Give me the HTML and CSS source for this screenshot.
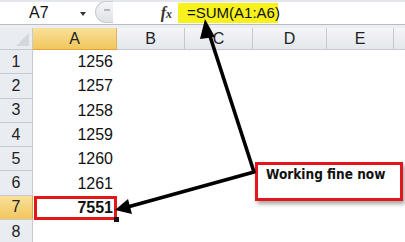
FILE: index.html
```html
<!DOCTYPE html>
<html>
<head>
<meta charset="utf-8">
<link rel="stylesheet" href="styles.css">
</head>
<body>
<div class="page">
  <div class="fbar">
    <div class="namebox"><span class="nb-text">A7</span><span class="nb-arrow"></span></div>
    <div class="grip"><span class="grip-dash"></span></div>
    <div class="fxarea"><span class="fx">f<span class="fx-x">x</span></span></div>
    <div class="formula">=SUM(A1:A6)</div>
    <div class="fill"></div>
  </div>
  <div class="band"></div>
  <div class="grid">
    <div class="corner"><span class="tri"></span></div>
    <div class="colhead sel">A</div>
    <div class="colhead">B</div>
    <div class="colhead">C</div>
    <div class="colhead">D</div>
    <div class="colhead">E</div>
    <div class="colhead last"></div>

    <div class="rowhead">1</div><div class="cell num">1256</div><div class="cell"></div><div class="cell"></div><div class="cell"></div><div class="cell"></div><div class="cell"></div>
    <div class="rowhead">2</div><div class="cell num">1257</div><div class="cell"></div><div class="cell"></div><div class="cell"></div><div class="cell"></div><div class="cell"></div>
    <div class="rowhead">3</div><div class="cell num">1258</div><div class="cell"></div><div class="cell"></div><div class="cell"></div><div class="cell"></div><div class="cell"></div>
    <div class="rowhead">4</div><div class="cell num">1259</div><div class="cell"></div><div class="cell"></div><div class="cell"></div><div class="cell"></div><div class="cell"></div>
    <div class="rowhead">5</div><div class="cell num">1260</div><div class="cell"></div><div class="cell"></div><div class="cell"></div><div class="cell"></div><div class="cell"></div>
    <div class="rowhead">6</div><div class="cell num">1261</div><div class="cell"></div><div class="cell"></div><div class="cell"></div><div class="cell"></div><div class="cell"></div>
    <div class="rowhead sel">7</div><div class="cell num active"><b>7551</b><span class="handle"></span></div><div class="cell"></div><div class="cell"></div><div class="cell"></div><div class="cell"></div><div class="cell"></div>
    <div class="rowhead">8</div><div class="cell"></div><div class="cell"></div><div class="cell"></div><div class="cell"></div><div class="cell"></div><div class="cell"></div>
  </div>

  <div class="callout">Working fine now</div>

  <svg class="arrows" width="405" height="242" viewBox="0 0 405 242">
    <g stroke="#000" stroke-width="3.6" fill="none" stroke-linecap="round" stroke-linejoin="round">
      <path d="M207 27 L254 172 L124 208"/>
    </g>
    <g fill="#000">
      <polygon points="205,19 215,37 200,39"/>
      <polygon points="115,210 128,199 132,214"/>
    </g>
  </svg>
</div>
</body>
</html>
```
FILE: styles.css
```css
* { box-sizing: border-box; }
html, body { margin: 0; padding: 0; background: #fff; }
body { width: 405px; height: 242px; overflow: hidden; font-family: "Liberation Sans", Arial, sans-serif; }

.page { position: relative; width: 405px; height: 242px; overflow: hidden; }

.fbar {
  display: flex;
  height: 24px;
  border-top: 2px solid #e3e6ea;
  background: #fff;
}
.namebox {
  width: 95px;
  display: flex;
  align-items: center;
  padding-left: 29px;
  font-size: 16px;
  color: #111;
}
.nb-text { width: 51px; }
.nb-arrow {
  width: 0; height: 0;
  border-left: 3.5px solid transparent;
  border-right: 3.5px solid transparent;
  border-top: 4px solid #333;
  margin-top: 2px;
}
.grip {
  width: 18px;
  height: 22px;
  margin-top: -1px;
  border-radius: 11px 0 0 11px;
  background: linear-gradient(#f4f5f7, #dfe2e6);
  border: 1px solid #c9ccd1;
  border-right: none;
  display: flex;
  align-items: center;
  justify-content: center;
}
.grip-dash { width: 6px; height: 2px; background: #b4b8bd; margin-left: 4px; margin-top: -4px; }
.fxarea {
  width: 65px;
  display: flex;
  align-items: center;
  justify-content: flex-end;
  padding-right: 6px;
}
.fx { font-family: "Liberation Serif", serif; font-style: italic; font-weight: bold; font-size: 16px; color: #333; }
.fx-x { font-size: 12px; }
.formula {
  width: 100px;
  height: 20px;
  margin-top: 1px;
  background: #f7f11e;
  font-size: 15px;
  color: #111;
  padding-left: 9px;
  line-height: 20px;
}
.fill { flex: 1; }

.band {
  height: 4px;
  background: #eceef1;
  border-top: 1px solid #b9bdc3;
}

.grid {
  display: grid;
  grid-template-columns: 33px 84px 68px 68px 74px 67px 11px;
  grid-template-rows: 22px repeat(8, 24.3px);
}
.corner {
  position: relative;
  background: #e9ecf0;
  border-right: 1px solid #c6cad0;
  border-bottom: 1px solid #c6cad0;
}
.tri {
  position: absolute;
  right: 3px; bottom: 3px;
  width: 0; height: 0;
  border-left: 13px solid transparent;
  border-bottom: 13px solid #d4d8dd;
}
.colhead {
  background: linear-gradient(#f3f5f7, #e4e7eb);
  border-right: 1px solid #c6cad0;
  border-bottom: 1px solid #c6cad0;
  display: flex;
  align-items: center;
  justify-content: center;
  font-size: 16px;
  color: #222;
}
.colhead.sel {
  background: linear-gradient(#f9e09a, #f2c75c);
  border-bottom: 1px solid #e2a43a;
  border-right: 1px solid #d9b46a;
}
.colhead.last { border-right: none; }
.rowhead {
  background: #e9ecf0;
  border-right: 1px solid #c6cad0;
  border-bottom: 1px solid #c6cad0;
  display: flex;
  align-items: center;
  justify-content: center;
  font-size: 16px;
  color: #222;
}
.rowhead.sel {
  background: linear-gradient(#f9e09a, #f2c75c);
  border-right: 1px solid #e2a43a;
}
.cell {
  background: #fff;
}
.num {
  display: flex;
  align-items: center;
  justify-content: flex-end;
  padding-right: 4px;
  font-size: 16px;
  color: #111;
}
.active {
  position: relative;
  border: 3px solid #e3161c;
  margin-left: 1px;
  padding-right: 1px;
}
.active b { font-weight: bold; }
.handle {
  position: absolute;
  right: -5px; bottom: -5px;
  width: 5px; height: 5px;
  background: #111;
}

.callout {
  position: absolute;
  left: 255px;
  top: 162px;
  width: 148px;
  height: 39px;
  border: 3px solid #e3161c;
  background: #fff;
  box-shadow: 2px 3px 4px rgba(0,0,0,0.35);
  font-family: "DejaVu Sans Condensed", "DejaVu Sans", Verdana, sans-serif;
  font-stretch: condensed;
  font-weight: bold;
  font-size: 13.5px;
  color: #111;
  padding: 1px 0 0 8px;
}

.arrows { position: absolute; left: 0; top: 0; pointer-events: none; }
```
